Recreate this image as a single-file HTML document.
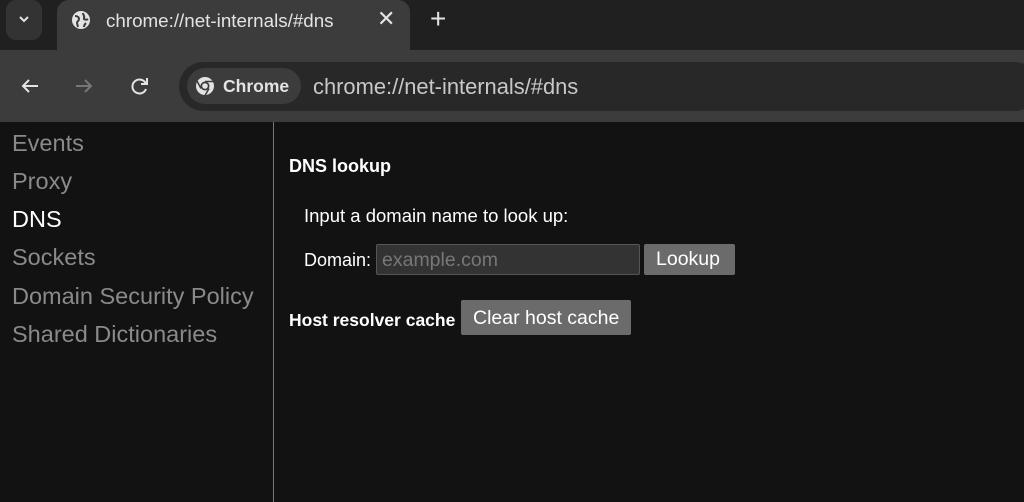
<!DOCTYPE html>
<html><head><style>
*{margin:0;padding:0;box-sizing:border-box}
body{width:1024px;height:502px;overflow:hidden;background:#121212;font-family:"Liberation Sans",sans-serif;position:relative}
.strip{position:absolute;left:0;top:0;width:1024px;height:50px;background:#202020}
.tab{position:absolute;left:57px;top:0;width:353px;height:52px;background:#3c3c3c;border-radius:12px 12px 0 0}
.drop{position:absolute;left:6px;top:0;width:36px;height:40px;background:#333;border-radius:10px}
.toolbar{position:absolute;left:0;top:50px;width:1024px;height:72px;background:#3c3c3c}
.omni{position:absolute;left:179px;top:62px;width:860px;height:49px;background:#282828;border-radius:25px}
.chip{position:absolute;left:187px;top:68px;width:114px;height:36px;background:#3c3c3c;border-radius:18px}
.t{position:absolute;white-space:nowrap}
.side{position:absolute;left:12px;font-size:23.5px;color:#8a8a8a}
.div{position:absolute;left:273px;top:122px;width:1px;height:380px;background:#777}
.btn{position:absolute;background:#6b6b6b;color:#fff;border-radius:2px;font-size:19.5px}
</style></head><body>
<div class="strip"></div>
<div class="drop"></div>
<svg class="t" style="left:17px;top:12px" width="14" height="14" viewBox="0 0 14 14"><path d="M3 5l4 4 4-4" stroke="#e3e3e3" stroke-width="2" fill="none"/></svg>
<div class="tab"></div>
<svg class="t" style="left:71px;top:10px" width="20" height="20" viewBox="0 0 20 20"><circle cx="10" cy="10" r="9" fill="#e3e3e3"/><path d="M4 6c2 0 4 1 4 3s-2 2-2 4l1 4M12 3c0 2 2 3 1 5s3 2 4 1M13 17c0-2 1-3 2-4" stroke="#3c3c3c" stroke-width="2" fill="none"/></svg>
<div class="t" style="left:106px;top:10px;font-size:18.8px;color:#e3e3e3">chrome://net-internals/#dns</div>
<div class="t" style="left:377px;top:6px;font-size:22px;color:#e3e3e3">✕</div>
<div class="t" style="left:430px;top:3px;font-size:28px;color:#e3e3e3">+</div>
<div class="toolbar"></div>
<svg class="t" style="left:19px;top:75px" width="22" height="22" viewBox="0 0 22 22"><path d="M19 11H4M10 5l-6 6 6 6" stroke="#e3e3e3" stroke-width="2" fill="none"/></svg>
<svg class="t" style="left:73px;top:75px" width="22" height="22" viewBox="0 0 22 22"><path d="M3 11h15M12 5l6 6-6 6" stroke="#777" stroke-width="2" fill="none"/></svg>
<svg class="t" style="left:129px;top:75px" width="22" height="22" viewBox="0 0 22 22"><path d="M17 9a7 7 0 1 0 0 5" stroke="#e3e3e3" stroke-width="2" fill="none"/><path d="M18 3v6h-6" stroke="#e3e3e3" stroke-width="2" fill="none"/></svg>
<div class="omni"></div>
<div class="chip"></div>
<svg class="t" style="left:194px;top:75px" width="22" height="22" viewBox="0 0 22 22"><circle cx="11" cy="11" r="9" fill="#e3e3e3"/><circle cx="11" cy="11" r="4.5" fill="#3c3c3c"/><circle cx="11" cy="11" r="2.8" fill="#e3e3e3"/><path d="M11 6.5h8M7 13.5L3 6M15 13.5l-4 7" stroke="#3c3c3c" stroke-width="1.5"/></svg>
<div class="t" style="left:223px;top:76px;font-size:17.5px;font-weight:bold;color:#e3e3e3">Chrome</div>
<div class="t" style="left:313px;top:74px;font-size:21.9px;color:#c8c8c8">chrome://net-internals/#dns</div>
<div class="div"></div>
<div class="t side" style="top:130px">Events</div>
<div class="t side" style="top:168px">Proxy</div>
<div class="t side" style="top:206px;color:#fff">DNS</div>
<div class="t side" style="top:244px">Sockets</div>
<div class="t side" style="top:283px">Domain Security Policy</div>
<div class="t side" style="top:321px">Shared Dictionaries</div>
<div class="t" style="left:289px;top:156px;font-size:18px;font-weight:bold;color:#fff">DNS lookup</div>
<div class="t" style="left:304px;top:205px;font-size:18.5px;color:#fff">Input a domain name to look up:</div>
<div class="t" style="left:304px;top:250px;font-size:18px;color:#fff">Domain:</div>
<div class="t" style="left:376px;top:244px;width:264px;height:31px;background:#333;border:1px solid #555;border-radius:2px;color:#777;font-size:19.5px;padding:4px 5px">example.com</div>
<div class="btn t" style="left:644px;top:244px;width:91px;height:31px;padding:4px 0 0 12px">Lookup</div>
<div class="t" style="left:289px;top:310px;font-size:17.5px;font-weight:bold;color:#fff">Host resolver cache</div>
<div class="btn t" style="left:461px;top:300px;width:170px;height:35px;padding:7px 0 0 12px">Clear host cache</div>
</body></html>
